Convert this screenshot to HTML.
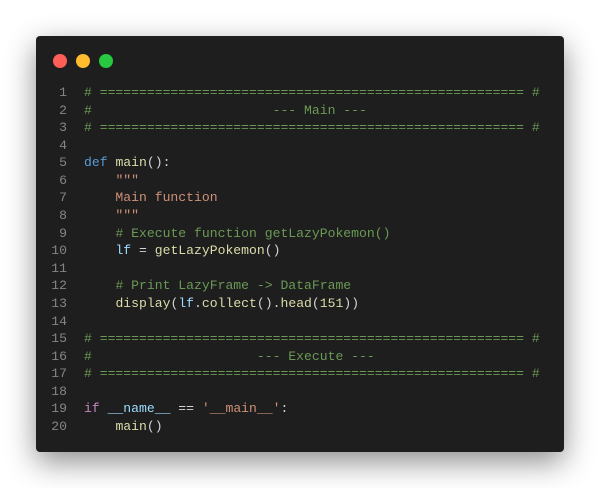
<!DOCTYPE html>
<html><head><style>
html,body{margin:0;padding:0;background:#fff;width:600px;height:488px;overflow:hidden}
.win{position:absolute;left:36px;top:36px;width:528px;height:416px;background:#1e1e1e;border-radius:4px;box-shadow:0 10px 30px rgba(0,0,0,0.45)}
.dot{position:absolute;top:18px;width:14px;height:14px;border-radius:50%}
pre{position:absolute;margin:0;top:48px;font-family:"Liberation Mono",monospace;font-size:13.1px;line-height:17.58px}
.ln{left:0;width:31px;text-align:right;color:#858585}
.code{left:48px;color:#d4d4d4}
.c{color:#6a9955}.k{color:#569cd6}.f{color:#dcdcaa}.s{color:#ce9178}.v{color:#9cdcfe}.p{color:#c586c0}
</style></head><body>
<div class="win">
<div class="dot" style="left:17px;background:#ff5f57"></div>
<div class="dot" style="left:40px;background:#febc2e"></div>
<div class="dot" style="left:63px;background:#28c840"></div>
<pre class="ln">1
2
3
4
5
6
7
8
9
10
11
12
13
14
15
16
17
18
19
20</pre>
<pre class="code"><span class="c"># ====================================================== #</span>
<span class="c">#                       --- Main ---</span>
<span class="c"># ====================================================== #</span>

<span class="k">def</span> <span class="f">main</span>():
    <span class="s">"""</span>
<span class="s">    Main function</span>
<span class="s">    """</span>
    <span class="c"># Execute function getLazyPokemon()</span>
    <span class="v">lf</span> = <span class="f">getLazyPokemon</span>()

    <span class="c"># Print LazyFrame -&gt; DataFrame</span>
    <span class="f">display</span>(<span class="v">lf</span>.<span class="f">collect</span>().<span class="f">head</span>(<span class="f">151</span>))

<span class="c"># ====================================================== #</span>
<span class="c">#                     --- Execute ---</span>
<span class="c"># ====================================================== #</span>

<span class="p">if</span> <span class="v">__name__</span> == <span class="s">'__main__'</span>:
    <span class="f">main</span>()</pre>
</div>
</body></html>
